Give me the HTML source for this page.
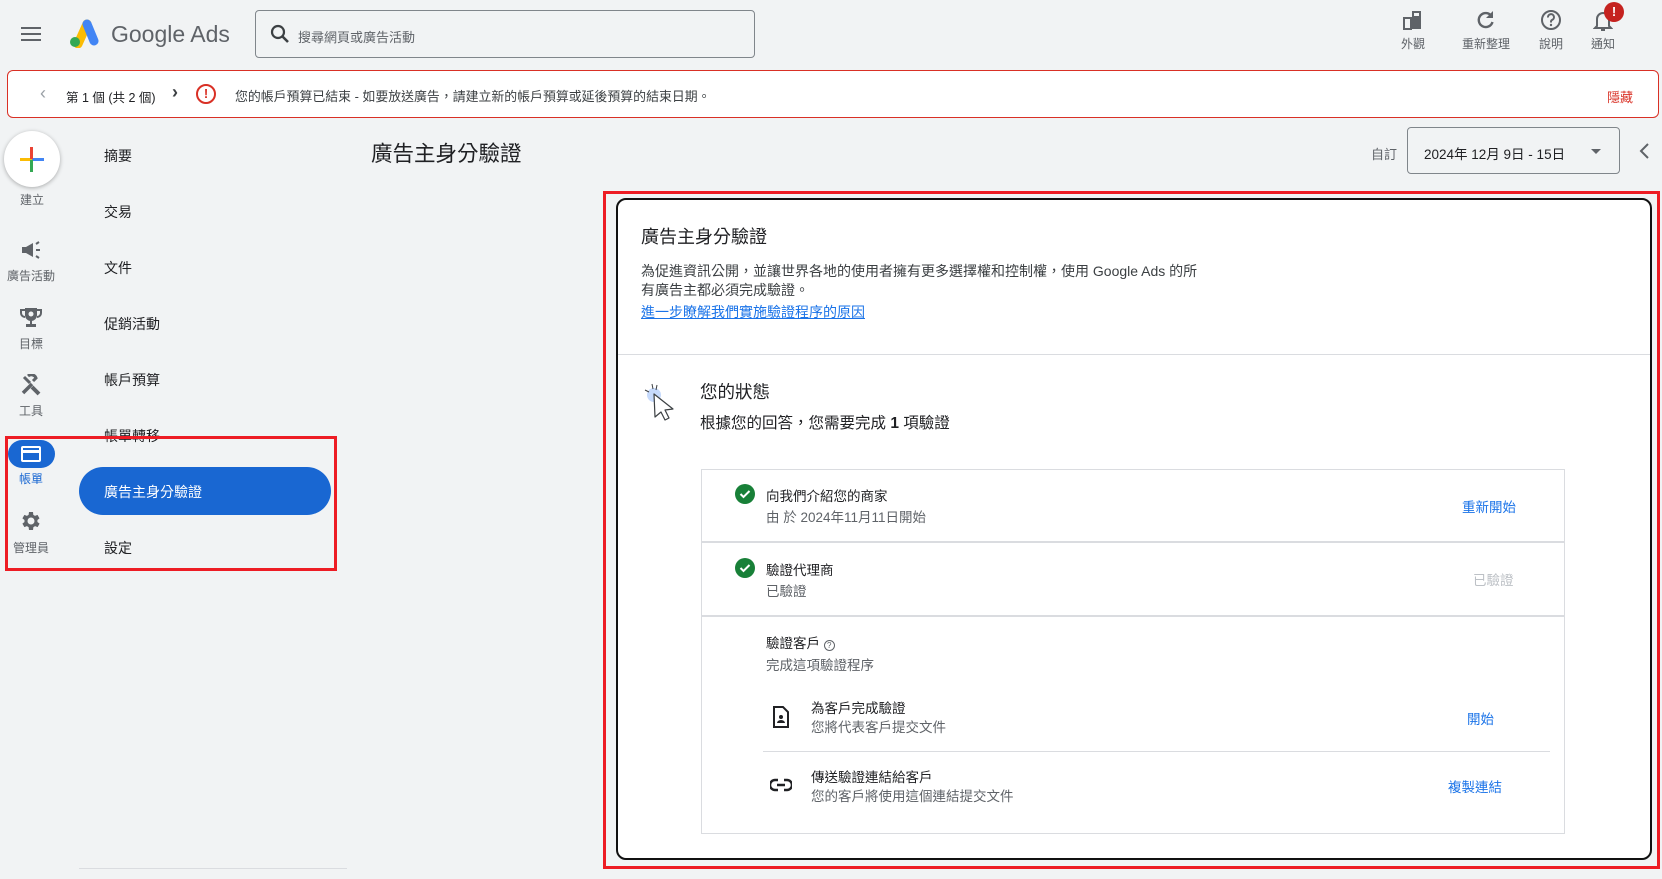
<!DOCTYPE html>
<html><head><meta charset="utf-8">
<style>
*{margin:0;padding:0;box-sizing:border-box}
body{width:1662px;height:879px;background:#f1f3f4;font-family:"Liberation Sans","Noto Sans CJK TC",sans-serif;color:#202124;position:relative;overflow:hidden}
.a{position:absolute;white-space:nowrap}
.lbl{font-size:12px;color:#5f6368;transform:translateX(-50%)}
.nav{font-size:14px;color:#202124;left:104px}
.blue{color:#1a73e8}
.t{font-size:13.5px}
</style></head><body>
<!-- header -->
<svg class="a" style="left:21px;top:26px" width="20" height="16"><rect y="1" width="20" height="2" fill="#5f6368"/><rect y="7" width="20" height="2" fill="#5f6368"/><rect y="13" width="20" height="2" fill="#5f6368"/></svg>
<svg class="a" style="left:67px;top:18px" width="32" height="30" viewBox="0 0 32 30"><path d="M11 26 L20 6" stroke="#fbbc04" stroke-width="9" stroke-linecap="round"/><path d="M20 6 L27 23" stroke="#4285f4" stroke-width="9" stroke-linecap="round"/><circle cx="8" cy="24" r="5" fill="#34a853"/></svg>
<div class="a" style="left:111px;top:21px;font-size:23px;color:#5f6368">Google Ads</div>
<div class="a" style="left:255px;top:10px;width:500px;height:48px;border:1px solid #80868b;border-radius:4px;background:#f1f3f4"></div>
<svg class="a" style="left:270px;top:24px" width="20" height="20" viewBox="0 0 20 20"><circle cx="8" cy="8" r="6" fill="none" stroke="#3c4043" stroke-width="2.2"/><path d="M12.5 12.5 L18 18" stroke="#3c4043" stroke-width="2.6"/></svg>
<div class="a" style="left:298px;top:27px;font-size:13px;color:#5f6368">搜尋網頁或廣告活動</div>
<!-- right icons -->
<svg class="a" style="left:1403px;top:10px" width="20" height="20" viewBox="0 0 20 20"><rect x="1" y="8" width="7" height="11" fill="none" stroke="#5f6368" stroke-width="2"/><rect x="9" y="1" width="9" height="18" fill="#5f6368"/><rect x="11" y="3" width="5" height="14" fill="#f1f3f4"/><rect x="10" y="6" width="6" height="12" fill="#5f6368"/></svg>
<div class="a lbl" style="left:1413px;top:35px">外觀</div>
<svg class="a" style="left:1476px;top:10px" width="20" height="20" viewBox="0 0 20 20"><path d="M15.5 6 A7 7 0 1 0 16.5 12" fill="none" stroke="#5f6368" stroke-width="2.4"/><path d="M17 1 L17 8 L10 8 Z" fill="#5f6368"/></svg>
<div class="a lbl" style="left:1486px;top:35px">重新整理</div>
<svg class="a" style="left:1540px;top:9px" width="22" height="22" viewBox="0 0 22 22"><circle cx="11" cy="11" r="9" fill="none" stroke="#5f6368" stroke-width="2"/><path d="M8 8.5 A3 3 0 1 1 12 11 C11 11.6 11 12 11 13.5" fill="none" stroke="#5f6368" stroke-width="2"/><circle cx="11" cy="16" r="1.2" fill="#5f6368"/></svg>
<div class="a lbl" style="left:1551px;top:35px">說明</div>
<svg class="a" style="left:1593px;top:10px" width="20" height="22" viewBox="0 0 20 22"><path d="M4 16 V9 A6 6 0 0 1 16 9 V16 L18 18 H2 Z" fill="none" stroke="#5f6368" stroke-width="2"/><path d="M8 20 H12" stroke="#5f6368" stroke-width="2"/></svg>
<div class="a" style="left:1604px;top:2px;width:20px;height:20px;border-radius:50%;background:#c5221f;color:#fff;font-size:13px;font-weight:bold;text-align:center;line-height:20px">!</div>
<div class="a lbl" style="left:1603px;top:35px">通知</div>
<!-- banner -->
<div class="a" style="left:7px;top:70px;width:1652px;height:48px;border:1px solid #d93025;border-radius:6px;background:#fff"></div>
<div class="a" style="left:40px;top:83px;font-size:18px;color:#9aa0a6">&#8249;</div>
<div class="a" style="left:66px;top:87px;font-size:12.5px;color:#202124">第 1 個 (共 2 個)</div>
<div class="a" style="left:172px;top:82px;font-size:18px;color:#3c4043;font-weight:bold">&#8250;</div>
<div class="a" style="left:196px;top:84px;width:20px;height:20px;border:2px solid #d93025;border-radius:50%;color:#d93025;font-size:13px;font-weight:bold;text-align:center;line-height:16px">!</div>
<div class="a" style="left:235px;top:86px;font-size:12.9px;color:#3c4043">您的帳戶預算已結束 - 如要放送廣告，請建立新的帳戶預算或延後預算的結束日期。</div>
<div class="a" style="left:1607px;top:87px;font-size:13px;color:#d93025">隱藏</div>
<!-- left rail -->
<div class="a" style="left:4px;top:131px;width:56px;height:56px;border-radius:50%;background:#fff;box-shadow:0 1px 4px rgba(0,0,0,.3)"></div>
<div class="a" style="left:20px;top:158px;width:12px;height:3px;background:#fbbc04"></div>
<div class="a" style="left:32px;top:158px;width:12px;height:3px;background:#4285f4"></div>
<div class="a" style="left:30px;top:147px;width:3px;height:12px;background:#ea4335"></div>
<div class="a" style="left:30px;top:160px;width:3px;height:12px;background:#34a853"></div>
<div class="a lbl" style="left:32px;top:191px">建立</div>
<svg class="a" style="left:20px;top:240px" width="22" height="20" viewBox="0 0 22 20"><path d="M2 7 H6 L13 3 V17 L6 13 H2 Z" fill="#5f6368"/><path d="M16 4 L19 2 M16 10 H20 M16 16 L19 18" stroke="#5f6368" stroke-width="2"/></svg>
<div class="a lbl" style="left:31px;top:267px">廣告活動</div>
<svg class="a" style="left:20px;top:306px" width="22" height="22" viewBox="0 0 22 22"><path d="M5 2 H17 V9 A6 6 0 0 1 5 9 Z" fill="#5f6368"/><path d="M5 4 H1 V7 A4 4 0 0 0 5 11 M17 4 H21 V7 A4 4 0 0 1 17 11" fill="none" stroke="#5f6368" stroke-width="2"/><rect x="10" y="14" width="2" height="4" fill="#5f6368"/><rect x="6" y="18" width="10" height="3" fill="#5f6368"/><circle cx="11" cy="8" r="2.5" fill="#f1f3f4"/></svg>
<div class="a lbl" style="left:31px;top:335px">目標</div>
<svg class="a" style="left:20px;top:374px" width="22" height="22" viewBox="0 0 22 22"><path d="M3 19 L12 10" stroke="#5f6368" stroke-width="3.5"/><path d="M4 3 L10 9 M8 2 A5 5 0 0 1 16 4 L13 7" stroke="#5f6368" stroke-width="3" fill="none"/><path d="M12 13 L19 20" stroke="#5f6368" stroke-width="4"/></svg>
<div class="a lbl" style="left:31px;top:402px">工具</div>
<div class="a" style="left:8px;top:440px;width:47px;height:28px;border-radius:14px;background:#1967d2"></div>
<div class="a" style="left:21px;top:446px;width:20px;height:16px;border:2px solid #fff;border-radius:2px"></div>
<div class="a" style="left:21px;top:450px;width:20px;height:3px;background:#fff"></div>
<div class="a lbl" style="left:31px;top:470px;color:#1967d2">帳單</div>
<svg class="a" style="left:19px;top:509px" width="24" height="24" viewBox="0 0 24 24"><path fill="#5f6368" d="M19.4 13a7.5 7.5 0 0 0 0-2l2.1-1.6-2-3.5-2.5 1a7 7 0 0 0-1.7-1L15 3h-4l-.4 2.9a7 7 0 0 0-1.7 1l-2.5-1-2 3.5L6.5 11a7.5 7.5 0 0 0 0 2l-2.1 1.6 2 3.5 2.5-1a7 7 0 0 0 1.7 1L11 21h4l.4-2.9a7 7 0 0 0 1.7-1l2.5 1 2-3.5zM13 15.5a3.5 3.5 0 1 1 0-7 3.5 3.5 0 0 1 0 7z" transform="translate(-1 0)"/></svg>
<div class="a lbl" style="left:31px;top:539px">管理員</div>
<!-- nav -->
<div class="a nav" style="top:146px">摘要</div>
<div class="a nav" style="top:202px">交易</div>
<div class="a nav" style="top:258px">文件</div>
<div class="a nav" style="top:314px">促銷活動</div>
<div class="a nav" style="top:370px">帳戶預算</div>
<div class="a nav" style="top:426px">帳單轉移</div>
<div class="a" style="left:79px;top:467px;width:252px;height:48px;border-radius:24px;background:#1967d2"></div>
<div class="a nav" style="top:482px;color:#fff">廣告主身分驗證</div>
<div class="a nav" style="top:538px">設定</div>
<div class="a" style="left:5px;top:436px;width:332px;height:135px;border:3px solid #ed1c24"></div>
<div class="a" style="left:79px;top:868px;width:268px;height:1px;background:#dadce0"></div>
<!-- page title -->
<div class="a" style="left:371px;top:137px;font-size:21.5px;color:#202124">廣告主身分驗證</div>
<div class="a" style="left:1371px;top:144px;font-size:13px;color:#5f6368">自訂</div>
<div class="a" style="left:1407px;top:127px;width:213px;height:47px;border:1px solid #80868b;border-radius:4px"></div>
<div class="a" style="left:1424px;top:143px;font-size:13.5px;color:#202124">2024年 12月 9日 - 15日</div>
<div class="a" style="left:1591px;top:149px;width:0;height:0;border-left:5px solid transparent;border-right:5px solid transparent;border-top:5px solid #5f6368"></div>
<svg class="a" style="left:1638px;top:142px" width="12" height="18"><path d="M10 2 L3 9 L10 16" fill="none" stroke="#5f6368" stroke-width="2"/></svg>
<!-- card -->
<div class="a" style="left:603px;top:191px;width:1057px;height:678px;border:3px solid #ed1c24"></div>
<div class="a" style="left:616px;top:198px;width:1036px;height:662px;border:2px solid #111;border-radius:10px;background:#fff"></div>
<div class="a" style="left:641px;top:223px;font-size:18px">廣告主身分驗證</div>
<div class="a" style="left:641px;top:262px;font-size:14px;color:#3c4043;line-height:19px">為促進資訊公開，並讓世界各地的使用者擁有更多選擇權和控制權，使用 Google Ads 的所<br>有廣告主都必須完成驗證。</div>
<div class="a" style="left:641px;top:302px;font-size:14px;color:#1a73e8;text-decoration:underline">進一步瞭解我們實施驗證程序的原因</div>
<div class="a" style="left:618px;top:354px;width:1032px;height:1px;background:#dadce0"></div>
<svg class="a" style="left:640px;top:380px" width="40" height="46" viewBox="0 0 40 46"><circle cx="14" cy="15" r="7" fill="#c6dafc"/><path d="M5 10 L9 12 M12 4 L13 9 M17 5 L16 10" stroke="#3c4043" stroke-width="1"/><path d="M14 14 L33 29 L25 30 L29 38 L25 40 L21 32 L15 37 Z" fill="#fff" stroke="#3c4043" stroke-width="1.2" stroke-linejoin="round"/></svg>
<div class="a" style="left:700px;top:379px;font-size:17.5px">您的狀態</div>
<div class="a" style="left:700px;top:411px;font-size:15.5px">根據您的回答，您需要完成 <b>1</b> 項驗證</div>
<!-- list -->
<div class="a" style="left:701px;top:469px;width:864px;height:365px;border:1px solid #dadce0"></div>
<div class="a" style="left:702px;top:541px;width:862px;height:2px;background:#dadce0"></div>
<div class="a" style="left:702px;top:615px;width:862px;height:2px;background:#dadce0"></div>
<svg class="a" style="left:735px;top:484px" width="20" height="20"><circle cx="10" cy="10" r="10" fill="#188038"/><path d="M5.5 10 L8.5 13 L14.5 7" fill="none" stroke="#fff" stroke-width="2"/></svg>
<div class="a t" style="left:766px;top:485px">向我們介紹您的商家</div>
<div class="a t" style="left:766px;top:506px;color:#5f6368">由 於 2024年11月11日開始</div>
<div class="a blue t" style="left:1462px;top:496px">重新開始</div>
<svg class="a" style="left:735px;top:558px" width="20" height="20"><circle cx="10" cy="10" r="10" fill="#188038"/><path d="M5.5 10 L8.5 13 L14.5 7" fill="none" stroke="#fff" stroke-width="2"/></svg>
<div class="a t" style="left:766px;top:559px">驗證代理商</div>
<div class="a t" style="left:766px;top:580px;color:#5f6368">已驗證</div>
<div class="a t" style="left:1473px;top:569px;color:#bdc1c6">已驗證</div>
<div class="a t" style="left:766px;top:632px">驗證客戶 <span style="color:#5f6368;border:1px solid #5f6368;border-radius:50%;display:inline-block;width:11px;height:11px;line-height:10px;text-align:center;font-size:8px">?</span></div>
<div class="a t" style="left:766px;top:654px;color:#5f6368">完成這項驗證程序</div>
<svg class="a" style="left:772px;top:706px" width="18" height="22" viewBox="0 0 18 22"><path d="M2 1 H11 L16 6 V21 H2 Z" fill="none" stroke="#202124" stroke-width="2"/><circle cx="9" cy="11" r="2" fill="#202124"/><path d="M5 17 A4 3 0 0 1 13 17 Z" fill="#202124"/></svg>
<div class="a t" style="left:811px;top:697px">為客戶完成驗證</div>
<div class="a t" style="left:811px;top:716px;color:#5f6368">您將代表客戶提交文件</div>
<div class="a blue t" style="left:1467px;top:708px">開始</div>
<div class="a" style="left:763px;top:751px;width:787px;height:1px;background:#dadce0"></div>
<svg class="a" style="left:770px;top:778px" width="22" height="14" viewBox="0 0 22 14"><path d="M8 2 H5 A5 5 0 0 0 5 12 H8 M14 2 H17 A5 5 0 0 1 17 12 H14 M7 7 H15" fill="none" stroke="#202124" stroke-width="2.4"/></svg>
<div class="a t" style="left:811px;top:766px">傳送驗證連結給客戶</div>
<div class="a t" style="left:811px;top:785px;color:#5f6368">您的客戶將使用這個連結提交文件</div>
<div class="a blue t" style="left:1448px;top:776px">複製連結</div>
</body></html>
